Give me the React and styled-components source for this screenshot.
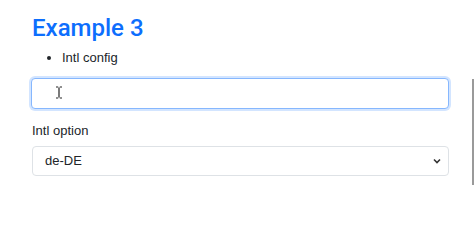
import React from 'react';
import styled, { createGlobalStyle } from 'styled-components';

const GlobalStyle = createGlobalStyle`
  html, body {
    margin: 0;
    padding: 0;
    background: #fff;
  }
  body {
    font-family: "Liberation Sans", Arial, sans-serif;
    color: #212529;
    overflow: hidden;
  }
`;

const Page = styled.div`
  position: relative;
  width: 474px;
  height: 229px;
  padding: 14px 25px 0 31px;
  box-sizing: border-box;
`;

const Title = styled.h2`
  margin: 0 0 5px 1px;
  font-family: Roboto, "Liberation Sans", sans-serif;
  font-weight: 500;
  font-size: 24px;
  line-height: 1.2;
  color: #0d6efd;
`;

const List = styled.ul`
  margin: 0 0 10px;
  padding-left: 31px;
  font-size: 13px;
  line-height: 20px;
`;

const Field = styled.div`
  position: relative;
  margin-bottom: ${p => p.$gap || 0}px;
`;

const TextInput = styled.input`
  display: block;
  width: 100%;
  height: 31px;
  box-sizing: border-box;
  border: 1px solid #86b7fe;
  border-radius: 4px;
  box-shadow: 0 0 0 2px rgba(13, 110, 253, 0.18);
  outline: none;
  padding: 0 12px;
  font-size: 13px;
  background: #fff;
`;

const Label = styled.label`
  display: block;
  margin: 0 0 6px 1px;
  font-size: 13px;
  line-height: 18px;
`;

const SelectBox = styled.div`
  display: flex;
  align-items: center;
  justify-content: space-between;
  height: 30px;
  margin-left: 1px;
  box-sizing: border-box;
  border: 1px solid #dee2e6;
  border-radius: 4px;
  padding: 0 7px 0 12px;
  font-size: 13px;
`;

const Caret = styled.span`
  position: absolute;
  left: 24px;
  top: 8px;
  line-height: 0;
`;

const ScrollEdge = styled.div`
  position: absolute;
  right: 0;
  top: 79px;
  width: 2px;
  height: 106px;
  background: #9a9a9a;
`;

export default function App() {
  return (
    <>
      <GlobalStyle />
      <Page>
        <Title>Example 3</Title>
        <List>
          <li>Intl config</li>
        </List>
        <Field $gap={13}>
          <TextInput type="text" readOnly />
          <Caret>
            <svg width="8" height="13" viewBox="0 0 8 13">
              <path d="M1 1h2.2M4.8 1H7M4 1.5v10M1 12h2.2M4.8 12H7" stroke="#222" strokeWidth="1.2" fill="none" />
            </svg>
          </Caret>
        </Field>
        <Label>Intl option</Label>
        <SelectBox>
          <span>de-DE</span>
          <svg width="8" height="6" viewBox="0 0 8 6">
            <path d="M1 1.5l3 3 3-3" stroke="#333" strokeWidth="1.6" fill="none" />
          </svg>
        </SelectBox>
        <ScrollEdge />
      </Page>
    </>
  );
}
